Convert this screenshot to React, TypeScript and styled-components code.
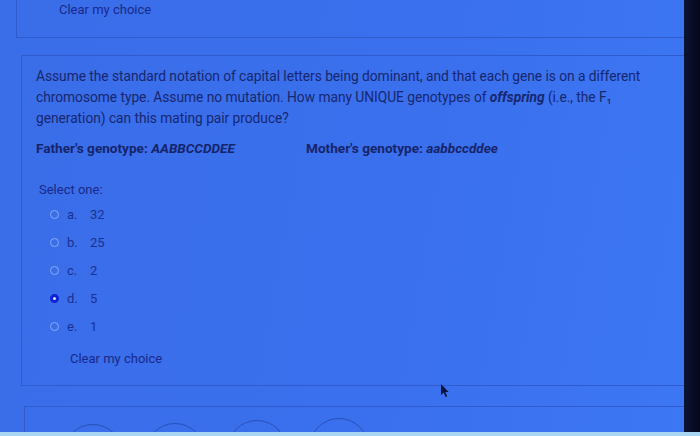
import styled, { createGlobalStyle } from "styled-components";

const Global = createGlobalStyle`
  html, body { margin: 0; padding: 0; background: #3a6ee8; }
  body { font-family: Roboto, "Liberation Sans", Arial, sans-serif; }
`;

const Frame = styled.div`
  position: relative;
  width: 700px;
  height: 436px;
  overflow: hidden;
  display: flex;
  background: linear-gradient(100deg, #3a6de8 0%, #3a70ee 60%, #3d77f3 100%);
  color: #17276f;
`;

const Screen = styled.div`
  flex: 1;
  display: flex;
  flex-direction: column;
  min-width: 0;
`;

const Bezel = styled.div`
  width: 16px;
  background: linear-gradient(90deg, #0b1332, #05081a);
`;

const BottomGlow = styled.div`
  position: absolute;
  left: 0;
  right: 0;
  bottom: 0;
  height: 4px;
  background: #a9d6f2;
`;

const TopBox = styled.div`
  margin-left: 16px;
  height: 37px;
  border-left: 1px solid #2f5bcc;
  border-bottom: 1px solid #2f5bcc;
  padding-left: 42px;
`;

const ClearLink = styled.div<{ $top?: number; $left?: number }>`
  font-size: 13px;
  color: #18298a;
  padding-top: ${(p) => p.$top ?? 0}px;
  margin-left: ${(p) => p.$left ?? 0}px;
`;

const QuestionBox = styled.div`
  margin: 17px 0 0 21px;
  height: 319px;
  border: 1px solid #2f5bcc;
  border-right: none;
  padding: 10px 0 0 14px;
  display: flex;
  flex-direction: column;
`;

const QText = styled.p`
  margin: 0;
  width: 630px;
  font-size: 13.8px;
  line-height: 21px;
  color: #17276f;
  letter-spacing: -0.05px;
`;

const Genotypes = styled.div`
  display: flex;
  margin-top: 11px;
  font-size: 13.6px;
  font-weight: 700;
  color: #16246a;
`;

const Geno = styled.div<{ $w?: number }>`
  width: ${(p) => (p.$w ? `${p.$w}px` : "auto")};
`;

const SelectLabel = styled.div`
  margin: 26px 0 0 3px;
  font-size: 13px;
  color: #18298a;
`;

const Options = styled.div`
  display: flex;
  flex-direction: column;
  margin: 3px 0 0 14px;
`;

const Option = styled.label`
  display: flex;
  align-items: center;
  height: 28px;
  font-size: 13px;
  color: #1d3192;
`;

const Radio = styled.span<{ $on?: boolean }>`
  width: 9px;
  height: 9px;
  border-radius: 50%;
  box-sizing: border-box;
  margin-right: 8px;
  border: ${(p) => (p.$on ? "3px solid #0f22d8" : "1px solid #8aabf5")};
  background: ${(p) => (p.$on ? "#dfe6ff" : "transparent")};
`;

const Letter = styled.span`
  width: 23px;
`;

const NavBox = styled.div`
  margin: 20px 0 0 24px;
  flex: 1;
  border-left: 1px solid #2f5bcc;
  border-top: 1px solid #2f5bcc;
  display: flex;
  gap: 22px;
  padding: 10px 0 0 38px;
  overflow: hidden;
`;

const NavCircle = styled.div<{ $lift: number }>`
  width: 58px;
  height: 58px;
  flex: none;
  border-radius: 50%;
  border: 1px solid #2a4fb8;
  margin-top: ${(p) => 7 - p.$lift}px;
`;

const Cursor = styled.svg`
  position: absolute;
  left: 440px;
  top: 383px;
`;

const options = [
  { k: "a.", v: "32" },
  { k: "b.", v: "25" },
  { k: "c.", v: "2" },
  { k: "d.", v: "5", on: true },
  { k: "e.", v: "1" },
];

export default function App() {
  return (
    <Frame>
      <Global />
      <Screen>
        <TopBox>
          <ClearLink $top={2}>Clear my choice</ClearLink>
        </TopBox>
        <QuestionBox>
          <QText>
            Assume the standard notation of capital letters being dominant, and that each gene is on a different
            chromosome type. Assume no mutation. How many UNIQUE genotypes of <b><i>offspring</i></b> (i.e., the F₁
            generation) can this mating pair produce?
          </QText>
          <Genotypes>
            <Geno $w={270}>
              Father's genotype: <i>AABBCCDDEE</i>
            </Geno>
            <Geno>
              Mother's genotype: <i>aabbccddee</i>
            </Geno>
          </Genotypes>
          <SelectLabel>Select one:</SelectLabel>
          <Options>
            {options.map((o) => (
              <Option key={o.k}>
                <Radio $on={o.on} />
                <Letter>{o.k}</Letter>
                <span>{o.v}</span>
              </Option>
            ))}
          </Options>
          <ClearLink $top={11} $left={34}>Clear my choice</ClearLink>
        </QuestionBox>
        <NavBox>
          {[0, 1, 4, 6].map((l) => (
            <NavCircle key={l} $lift={l} />
          ))}
        </NavBox>
      </Screen>
      <Bezel />
      <BottomGlow />
      <Cursor width="10" height="16" viewBox="0 0 10 16">
        <path d="M1 1 L1 12 L3.6 9.6 L5.6 14 L7.2 13.3 L5.3 9 L8.6 9 Z" fill="#0b1440" />
      </Cursor>
    </Frame>
  );
}
